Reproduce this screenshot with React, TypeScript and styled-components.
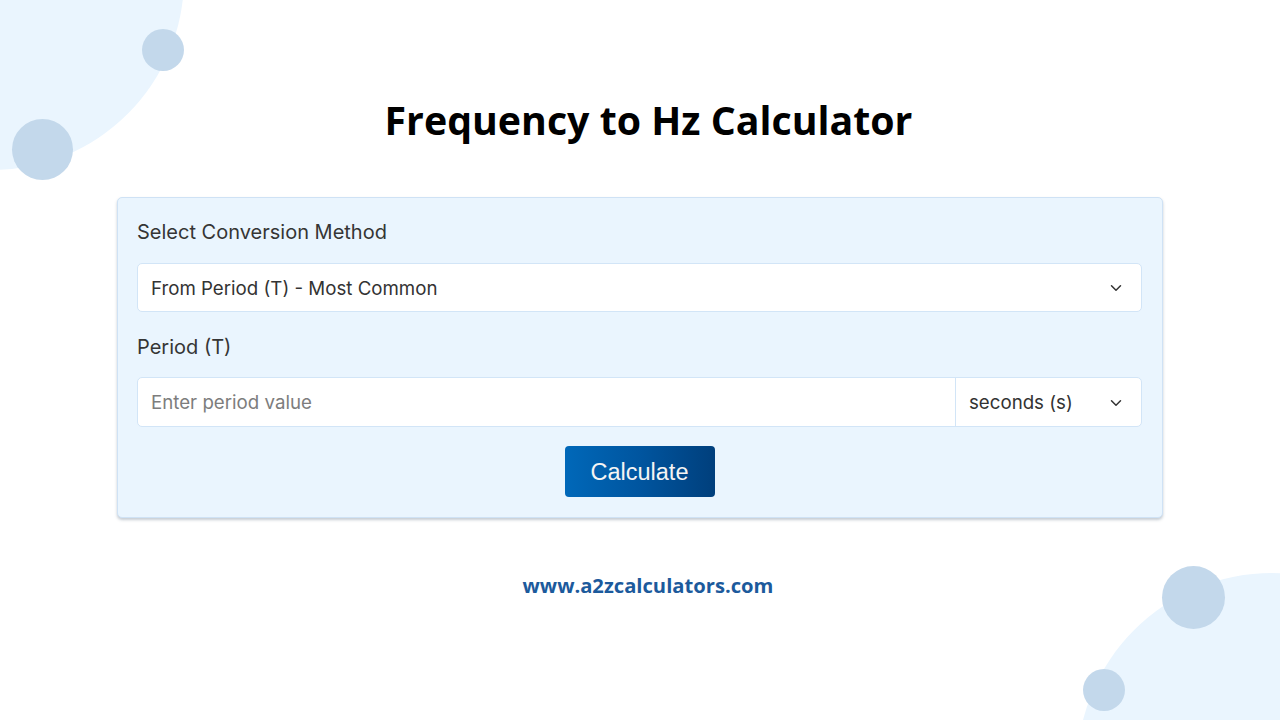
import React from "react"
import styled, { createGlobalStyle } from "styled-components"
import { ChevronDown } from "lucide-react"

const GlobalStyle = createGlobalStyle`
  html, body {
    margin: 0;
    padding: 0;
    background: #ffffff;
  }
`

const Page = styled.div`
  position: relative;
  width: 1280px;
  height: 720px;
  overflow: hidden;
  background: #ffffff;
  display: flex;
  flex-direction: column;
  align-items: center;
  padding-top: 95px;
  box-sizing: border-box;
`

const Blob = styled.div<{ $x: number; $y: number; $r: number; $dark?: boolean }>`
  position: absolute;
  left: ${(p) => p.$x - p.$r}px;
  top: ${(p) => p.$y - p.$r}px;
  width: ${(p) => p.$r * 2}px;
  height: ${(p) => p.$r * 2}px;
  border-radius: 50%;
  background: ${(p) => (p.$dark ? "#c3d8eb" : "#eaf5fe")};
  z-index: 0;
`

const Title = styled.h1`
  position: relative;
  z-index: 1;
  margin: 0 0 0 17px;
  font-family: "Open Sans", "Liberation Sans", sans-serif;
  font-weight: 700;
  font-size: 39.3px;
  line-height: 50px;
  color: #000000;
`

const Card = styled.div`
  position: relative;
  z-index: 1;
  margin-top: 52px;
  width: 1046px;
  box-sizing: border-box;
  padding: 21px 20px 20px 19px;
  background: #eaf5fe;
  border: 1px solid #cfe2f5;
  border-radius: 5px;
  box-shadow: 0 2px 3px rgba(90, 110, 130, 0.35);
  display: flex;
  flex-direction: column;
  font-family: Inter, "Liberation Sans", sans-serif;
`

const Label = styled.div<{ $top?: number }>`
  margin-top: ${(p) => p.$top ?? 0}px;
  font-size: 20px;
  line-height: 26px;
  color: #353535;
`

const Field = styled.div<{ $top: number; $h: number }>`
  margin-top: ${(p) => p.$top}px;
  height: ${(p) => p.$h}px;
  flex: 0 0 ${(p) => p.$h}px;
  box-sizing: border-box;
  background: #ffffff;
  border: 1px solid #d2e5f7;
  border-radius: 5px;
  display: flex;
  align-items: stretch;
`

const SelectBox = styled.div<{ $w?: number }>`
  flex: ${(p) => (p.$w ? `0 0 ${p.$w}px` : "1 1 auto")};
  box-sizing: border-box;
  display: flex;
  align-items: center;
  justify-content: space-between;
  padding: 1px 16px 0 13px;
  font-size: 18.7px;
  color: #333333;
  border-left: ${(p) => (p.$w ? "1px solid #d2e5f7" : "none")};
  svg {
    color: #333333;
  }
`

const Placeholder = styled.div`
  flex: 1 1 auto;
  display: flex;
  align-items: center;
  padding: 1px 0 0 13px;
  font-size: 18.7px;
  color: #7d7d7d;
`

const ButtonRow = styled.div`
  margin-top: 19px;
  display: flex;
  justify-content: center;
`

const CalcButton = styled.button`
  width: 150px;
  height: 51px;
  padding: 2px 0 0;
  border: none;
  border-radius: 4px;
  background: linear-gradient(90deg, #0068b9 0%, #00559f 50%, #003f7c 100%);
  color: #f4f4f4;
  font-family: "Liberation Sans", Arial, sans-serif;
  font-size: 23.5px;
  line-height: 49px;
  cursor: pointer;
`

const Footer = styled.div`
  position: relative;
  z-index: 1;
  margin: 53px 0 0 16px;
  font-family: "Open Sans", "Liberation Sans", sans-serif;
  font-weight: 700;
  font-size: 20.2px;
  line-height: 28px;
  color: #1c5a9c;
`

export default function App() {
  return (
    <>
      <GlobalStyle />
      <Page>
        <Blob $x={-8} $y={-22} $r={192} />
        <Blob $x={163} $y={50} $r={21} $dark />
        <Blob $x={42} $y={149} $r={30.5} $dark />
        <Blob $x={1272} $y={768} $r={195} />
        <Blob $x={1193} $y={597} $r={31.5} $dark />
        <Blob $x={1104} $y={690} $r={21} $dark />

        <Title>Frequency to Hz Calculator</Title>

        <Card>
          <Label>Select Conversion Method</Label>
          <Field $top={18} $h={49}>
            <SelectBox>
              <span>From Period (T) - Most Common</span>
              <ChevronDown size={18} strokeWidth={2} />
            </SelectBox>
          </Field>

          <Label $top={22}>Period (T)</Label>
          <Field $top={17} $h={50}>
            <Placeholder>Enter period value</Placeholder>
            <SelectBox $w={186}>
              <span>seconds (s)</span>
              <ChevronDown size={18} strokeWidth={2} />
            </SelectBox>
          </Field>

          <ButtonRow>
            <CalcButton>Calculate</CalcButton>
          </ButtonRow>
        </Card>

        <Footer>www.a2zcalculators.com</Footer>
      </Page>
    </>
  )
}
